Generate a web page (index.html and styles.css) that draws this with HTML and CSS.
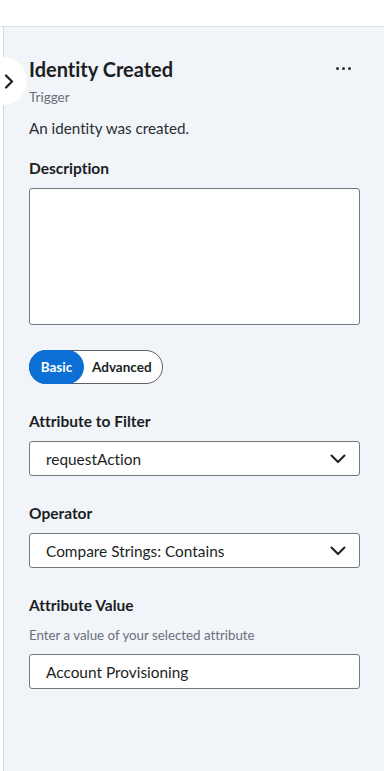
FILE: index.html
```html
<!DOCTYPE html>
<html>
<head>
<meta charset="utf-8">
<link rel="stylesheet" href="styles.css">
</head>
<body>
<div class="topbar"></div>
<div class="main">
  <div class="gutter"></div>
  <div class="panel">
    <button class="collapse" aria-label="Collapse">
      <svg width="10" height="15" viewBox="0 0 10 15"><path d="M2 1.5 L8 7.5 L2 13.5" fill="none" stroke="#1b1f24" stroke-width="2.2" stroke-linecap="round" stroke-linejoin="round"/></svg>
    </button>
    <div class="header">
      <h1 class="title">Identity Created</h1>
      <span class="more"><i></i><i></i><i></i></span>
    </div>
    <div class="subtitle">Trigger</div>
    <p class="desc">An identity was created.</p>

    <label class="label first">Description</label>
    <div class="textarea"></div>

    <div class="toggle">
      <span class="seg active">Basic</span>
      <span class="seg">Advanced</span>
    </div>

    <label class="label">Attribute to Filter</label>
    <div class="select">
      <span>requestAction</span>
      <svg width="16" height="10" viewBox="0 0 16 10"><path d="M1.5 1.5 L8 8 L14.5 1.5" fill="none" stroke="#1b1f24" stroke-width="2" stroke-linecap="round" stroke-linejoin="round"/></svg>
    </div>

    <label class="label">Operator</label>
    <div class="select">
      <span>Compare Strings: Contains</span>
      <svg width="16" height="10" viewBox="0 0 16 10"><path d="M1.5 1.5 L8 8 L14.5 1.5" fill="none" stroke="#1b1f24" stroke-width="2" stroke-linecap="round" stroke-linejoin="round"/></svg>
    </div>

    <label class="label">Attribute Value</label>
    <div class="help">Enter a value of your selected attribute</div>
    <div class="input">Account Provisioning</div>
  </div>
</div>
</body>
</html>
```

FILE: styles.css
```css
* { box-sizing: border-box; }
html, body { margin: 0; padding: 0; height: 100%; }
body {
  font-family: "Lato", "Noto Sans", sans-serif;
  font-variant-ligatures: none;
  color: #1b1f24;
  background: #ffffff;
  display: flex;
  flex-direction: column;
  overflow: hidden;
}
.topbar {
  height: 27px;
  background: #ffffff;
  border-bottom: 1px solid #dde1e6;
  flex: none;
}
.main {
  flex: 1;
  display: flex;
}
.gutter {
  width: 4px;
  background: #ffffff;
  border-right: 1px solid #d4d8de;
  flex: none;
}
.panel {
  position: relative;
  flex: 1;
  background: #f1f4f8;
  padding: 30px 24px 0 25px;
  display: flex;
  flex-direction: column;
}
.collapse {
  position: absolute;
  left: -25px;
  top: 30px;
  width: 48px;
  height: 48px;
  border-radius: 50%;
  background: #ffffff;
  border: none;
  padding: 0 0 0 25px;
  display: flex;
  align-items: center;
  justify-content: flex-start;
}
.header {
  display: flex;
  align-items: center;
  justify-content: space-between;
  height: 24px;
}
.title {
  margin: 0;
  font-size: 20px;
  line-height: 24px;
  font-weight: 700;
  color: #1b1f24;
}
.more {
  display: flex;
  gap: 2.5px;
  margin-right: 9px;
  margin-top: -1px;
}
.more i {
  width: 3.5px;
  height: 3.5px;
  background: #2b2f36;
  border-radius: 50%;
  display: block;
}
.subtitle {
  margin-top: 8px;
  font-size: 13.5px;
  line-height: 16px;
  color: #6b7078;
}
.desc {
  margin: 13px 0 0;
  font-size: 15.2px;
  line-height: 20px;
  color: #2a2e35;
}
.label {
  display: block;
  margin-top: 27px;
  font-size: 15.5px;
  line-height: 20px;
  font-weight: 700;
  color: #1b1f24;
}
.label.first { margin-top: 20px; }
.textarea {
  margin-top: 10px;
  height: 137px;
  background: #ffffff;
  border: 1px solid #73787f;
  border-radius: 3px;
}
.toggle {
  margin-top: 25px;
  display: flex;
  align-items: center;
  width: 134px;
  height: 34px;
  border: 1px solid #5d626a;
  border-radius: 17px;
  background: #ffffff;
}
.seg {
  font-size: 13.5px;
  font-weight: 700;
  color: #1b1f24;
  display: flex;
  align-items: center;
}
.seg.active {
  background: #0b6fd6;
  color: #ffffff;
  border-radius: 17px;
  padding: 0 10px;
  margin: -1px 0 -1px -1px;
  height: 34px;
  width: 55px;
  justify-content: center;
}
.seg + .seg { padding-left: 8px; }
.select, .input {
  margin-top: 10px;
  height: 35px;
  background: #ffffff;
  border: 1px solid #73787f;
  border-radius: 3px;
  display: flex;
  align-items: center;
  justify-content: space-between;
  padding: 0 13px 0 16px;
  font-size: 15.4px;
  color: #1b1f24;
}
.help {
  margin-top: 12px;
  font-size: 13.3px;
  line-height: 16px;
  color: #6b7078;
}
.input { margin-top: 11px; }
```
